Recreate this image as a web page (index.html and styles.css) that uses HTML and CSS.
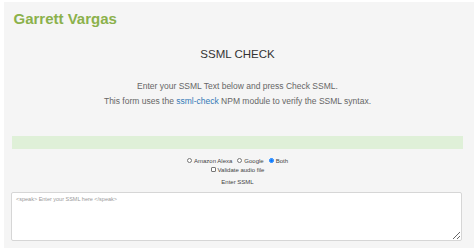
FILE: index.html
```html
<!DOCTYPE html>
<html>
<head>
<meta charset="utf-8">
<link rel="stylesheet" href="styles.css">
</head>
<body>
<div class="page">
  <div class="brand">Garrett Vargas</div>
  <h1 class="title">SSML CHECK</h1>
  <p class="intro">Enter your SSML Text below and press Check SSML.</p>
  <p class="intro">This form uses the <a class="link" href="#">ssml-check</a> NPM module to verify the SSML syntax.</p>
  <div class="alert"></div>
  <div class="options">
    <label class="opt"><input type="radio" name="p" class="radio"> Amazon Alexa</label>
    <label class="opt"><input type="radio" name="p" class="radio"> Google</label>
    <label class="opt"><input type="radio" name="p" class="radio" checked> Both</label>
  </div>
  <div class="options check-row">
    <label class="opt"><input type="checkbox" class="check"> Validate audio file</label>
  </div>
  <div class="label">Enter SSML</div>
  <textarea class="input" placeholder="<speak> Enter your SSML here </speak>"></textarea>
  <div class="actions"><button class="btn">Check SSML</button></div>
</div>
</body>
</html>
```
FILE: styles.css
```css
html, body {
  margin: 0;
  padding: 0;
  background: #ffffff;
  font-family: "Liberation Sans", Arial, sans-serif;
  overflow: hidden;
}
.page {
  margin: 2px 0 0 4px;
  background: #f5f5f5;
  padding: 7.6px 11px 20px 8px;
  height: 300px;
}
.brand {
  color: #8bb14b;
  font-weight: bold;
  font-size: 15px;
  line-height: 17px;
  padding-left: 1.5px;
}
.title {
  margin: 20.7px 0 0;
  font-size: 11.5px;
  line-height: 14px;
  font-weight: normal;
  color: #333;
  text-align: center;
}
.intro {
  margin: 0;
  font-size: 8.5px;
  line-height: 15px;
  color: #666;
  text-align: center;
}
.intro:first-of-type {
  margin-top: 17.7px;
}
.link {
  color: #337ab7;
  text-decoration: none;
}
.alert {
  margin-top: 27px;
  height: 13px;
  background: #dff0d8;
}
.options {
  margin-top: 8px;
  display: flex;
  justify-content: center;
  gap: 5px;
  font-size: 6px;
  line-height: 8px;
  color: #444;
}
.check-row {
  margin-top: 1px;
}
.opt {
  display: flex;
  align-items: center;
  gap: 2px;
}
.radio {
  margin: 0;
  width: 5px;
  height: 5px;
}
.check {
  appearance: none;
  -webkit-appearance: none;
  margin: 0;
  width: 5px;
  height: 5px;
  box-sizing: border-box;
  border: 0.6px solid #767676;
  border-radius: 1px;
  background: #fff;
}
.label {
  margin-top: 4px;
  text-align: center;
  font-size: 6px;
  line-height: 8px;
  color: #444;
}
.input {
  display: block;
  box-sizing: border-box;
  margin: 6px 0 0 -1px;
  width: 451px;
  height: 49px;
  border: 1px solid #d6d6d6;
  border-radius: 2px;
  background: #fff;
  padding: 3px 4px;
  font-family: "Liberation Sans", Arial, sans-serif;
  font-size: 5.5px;
  color: #555;
}
.input::placeholder {
  color: #999;
}
.actions {
  margin-top: 3px;
  text-align: center;
}
.btn {
  font-family: "Liberation Sans", Arial, sans-serif;
  font-size: 6px;
  padding: 2px 5px;
  border: 1px solid #ccc;
  background: #fff;
  color: #333;
}
```
